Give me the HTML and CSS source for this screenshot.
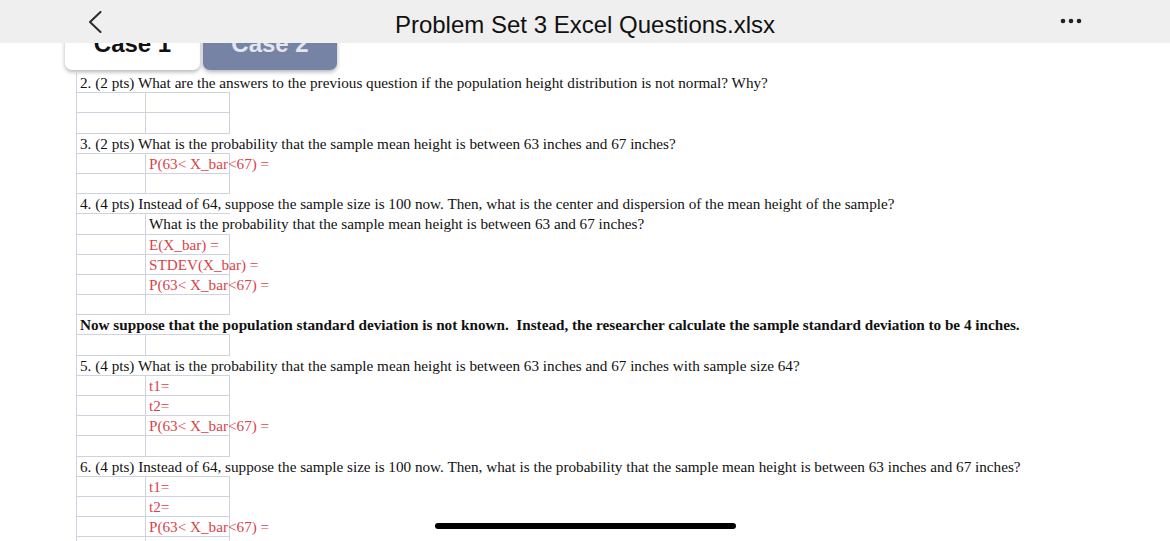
FILE: index.html
```html
<!DOCTYPE html>
<html lang="en">
<head>
    <meta charset="UTF-8">
    <meta name="viewport" content="width=device-width, initial-scale=1.0">
    <title>Problem Set 3 Excel Questions.xlsx</title>
    <link rel="stylesheet" href="styles.css">
</head>
<body>
    <!-- top bar sits over the sheet tabs -->
    <header class="top-bar">
        <div class="back-button">
            <svg width="14" height="22" viewBox="0 0 14 22">
                <polyline points="12.5,1 2,11 12.5,21" fill="none" stroke="#2b2b2b" stroke-width="2" stroke-linecap="round" stroke-linejoin="round"/>
            </svg>
        </div>
        <div class="file-title">Problem Set 3 Excel Questions.xlsx</div>
        <div class="more-button">
            <svg width="22" height="6" viewBox="0 0 22 6">
                <circle cx="3" cy="3" r="2.3" fill="#222"/>
                <circle cx="11" cy="3" r="2.3" fill="#222"/>
                <circle cx="19" cy="3" r="2.3" fill="#222"/>
            </svg>
        </div>
    </header>

    <div class="sheet-tabs">
        <div class="tab tab-active">Case 1</div>
        <div class="tab tab-other">Case 2</div>
    </div>

    <div class="sheet">
        <div class="row"><div class="cell-wide">2. (2 pts) What are the answers to the previous question if the population height distribution is not normal? Why?</div></div>
        <div class="row"><div class="cell-a"></div><div class="cell-b"></div></div>
        <div class="row"><div class="cell-a"></div><div class="cell-b"></div></div>
        <div class="row"><div class="cell-wide">3. (2 pts) What is the probability that the sample mean height is between 63 inches and 67 inches?</div></div>
        <div class="row"><div class="cell-a"></div><div class="cell-b answer">P(63&lt; X_bar&lt;67) =</div></div>
        <div class="row"><div class="cell-a"></div><div class="cell-b"></div></div>
        <div class="row"><div class="cell-wide">4. (4 pts) Instead of 64, suppose the sample size is 100 now. Then, what is the center and dispersion of the mean height of the sample?</div></div>
        <div class="row"><div class="cell-a"></div><div class="cell-b overflow">What is the probability that the sample mean height is between 63 and 67 inches?</div></div>
        <div class="row"><div class="cell-a"></div><div class="cell-b answer">E(X_bar) =</div></div>
        <div class="row"><div class="cell-a"></div><div class="cell-b answer">STDEV(X_bar) =</div></div>
        <div class="row"><div class="cell-a"></div><div class="cell-b answer">P(63&lt; X_bar&lt;67) =</div></div>
        <div class="row"><div class="cell-a"></div><div class="cell-b"></div></div>
        <div class="row"><div class="cell-wide bold">Now suppose that the population standard deviation is not known.&nbsp; Instead, the researcher calculate the sample standard deviation to be 4 inches.</div></div>
        <div class="row"><div class="cell-a"></div><div class="cell-b"></div></div>
        <div class="row"><div class="cell-wide">5. (4 pts) What is the probability that the sample mean height is between 63 inches and 67 inches with sample size 64?</div></div>
        <div class="row"><div class="cell-a"></div><div class="cell-b answer">t1=</div></div>
        <div class="row"><div class="cell-a"></div><div class="cell-b answer">t2=</div></div>
        <div class="row"><div class="cell-a"></div><div class="cell-b answer">P(63&lt; X_bar&lt;67) =</div></div>
        <div class="row"><div class="cell-a"></div><div class="cell-b"></div></div>
        <div class="row"><div class="cell-wide">6. (4 pts) Instead of 64, suppose the sample size is 100 now. Then, what is the probability that the sample mean height is between 63 inches and 67 inches?</div></div>
        <div class="row"><div class="cell-a"></div><div class="cell-b answer">t1=</div></div>
        <div class="row"><div class="cell-a"></div><div class="cell-b answer">t2=</div></div>
        <div class="row"><div class="cell-a"></div><div class="cell-b answer">P(63&lt; X_bar&lt;67) =</div></div>
        <div class="row"><div class="cell-a"></div><div class="cell-b"></div></div>
    </div>

    <div class="home-indicator"></div>
</body>
</html>
```

FILE: styles.css
```css
body {
    margin: 0;
    background-color: #fff;
    font-family: "Liberation Serif", "Times New Roman", serif;
    overflow: hidden;
}
.top-bar {
    position: fixed;
    top: 0;
    left: 0;
    right: 0;
    height: 43px;
    padding: 0 88px;
    background-color: #efefef;
    display: grid;
    grid-template-columns: 1fr auto 1fr;
    align-items: center;
    z-index: 2;
}
.back-button {
    justify-self: start;
    display: flex;
    padding-top: 1px;
}
.file-title {
    font-family: "Liberation Sans", Arial, sans-serif;
    font-size: 24px;
    color: #111;
    padding-top: 6px;
}
.more-button {
    justify-self: end;
    display: flex;
    padding-bottom: 2px;
}
.sheet-tabs {
    display: flex;
    gap: 3px;
    margin-top: 30px;
    margin-left: 65px;
}
.tab {
    width: 135px;
    height: 40px;
    box-sizing: border-box;
    padding-top: 2px;
    text-align: center;
    font-family: "Liberation Sans", Arial, sans-serif;
    font-weight: bold;
    font-size: 24px;
    line-height: 24px;
    border-radius: 0 0 7px 7px;
    box-shadow: 0 2px 4px rgba(0, 0, 0, 0.3);
}
.tab-active {
    background-color: #fff;
    color: #111;
}
.tab-other {
    width: 134px;
    background-color: #7783a5;
    color: #e3e6ee;
}
.sheet {
    margin-top: 3px;
    margin-left: 76px;
    width: 153px;
    border-left: 1px solid #cfd3de;
    font-size: 15.2px;
}
.row {
    display: flex;
    height: 20.2px;
    box-sizing: border-box;
    border-bottom: 1px solid #cfd3de;
    white-space: nowrap;
    line-height: 20px;
}
.cell-a {
    width: 69px;
    flex: none;
    box-sizing: border-box;
    border-right: 1px solid #cfd3de;
}
.cell-b {
    width: 84px;
    flex: none;
    box-sizing: border-box;
    border-right: 1px solid #cfd3de;
    padding-left: 3px;
}
.cell-wide {
    padding-left: 3px;
    color: #111;
}
.bold {
    font-weight: bold;
}
.answer {
    color: #d9434a;
}
.overflow {
    border-right: none;
    color: #111;
}
.home-indicator {
    position: fixed;
    left: 435px;
    bottom: 12px;
    width: 301px;
    height: 6px;
    border-radius: 3px;
    background-color: #000;
}
```
